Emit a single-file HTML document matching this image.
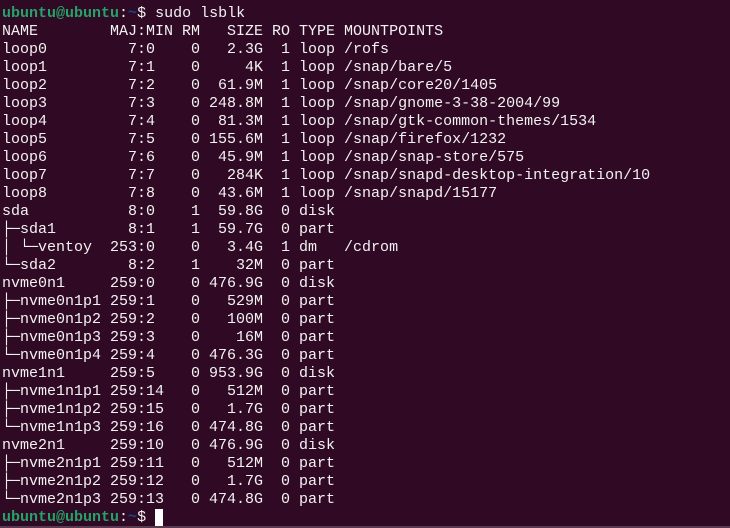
<!DOCTYPE html>
<html><head><meta charset="utf-8"><style>
html,body{margin:0;padding:0;background:#300a24;width:730px;height:528px;overflow:hidden}
pre{margin:0;padding:5px 0 0 2px;font-family:"Liberation Mono","DejaVu Sans Mono",monospace;font-size:15px;line-height:18px;color:#f2f2f2}
.g{color:#26a269;font-weight:bold}.b{color:#12488b;font-weight:bold}
.c{display:inline-block;width:8px;height:18px;background:#fff;vertical-align:top}
.bot{position:absolute;left:0;top:526px;width:730px;height:2px;background:#5a3a50}
</style></head><body><pre><span class="g">ubuntu@ubuntu</span>:<span class="b">~</span>$ sudo lsblk
NAME        MAJ:MIN RM   SIZE RO TYPE MOUNTPOINTS
loop0         7:0    0   2.3G  1 loop /rofs
loop1         7:1    0     4K  1 loop /snap/bare/5
loop2         7:2    0  61.9M  1 loop /snap/core20/1405
loop3         7:3    0 248.8M  1 loop /snap/gnome-3-38-2004/99
loop4         7:4    0  81.3M  1 loop /snap/gtk-common-themes/1534
loop5         7:5    0 155.6M  1 loop /snap/firefox/1232
loop6         7:6    0  45.9M  1 loop /snap/snap-store/575
loop7         7:7    0   284K  1 loop /snap/snapd-desktop-integration/10
loop8         7:8    0  43.6M  1 loop /snap/snapd/15177
sda           8:0    1  59.8G  0 disk 
├─sda1        8:1    1  59.7G  0 part 
│ └─ventoy  253:0    0   3.4G  1 dm   /cdrom
└─sda2        8:2    1    32M  0 part 
nvme0n1     259:0    0 476.9G  0 disk 
├─nvme0n1p1 259:1    0   529M  0 part 
├─nvme0n1p2 259:2    0   100M  0 part 
├─nvme0n1p3 259:3    0    16M  0 part 
└─nvme0n1p4 259:4    0 476.3G  0 part 
nvme1n1     259:5    0 953.9G  0 disk 
├─nvme1n1p1 259:14   0   512M  0 part 
├─nvme1n1p2 259:15   0   1.7G  0 part 
└─nvme1n1p3 259:16   0 474.8G  0 part 
nvme2n1     259:10   0 476.9G  0 disk 
├─nvme2n1p1 259:11   0   512M  0 part 
├─nvme2n1p2 259:12   0   1.7G  0 part 
└─nvme2n1p3 259:13   0 474.8G  0 part 
<span class="g">ubuntu@ubuntu</span>:<span class="b">~</span>$ <span class="c"></span></pre><div class="bot"></div></body></html>
